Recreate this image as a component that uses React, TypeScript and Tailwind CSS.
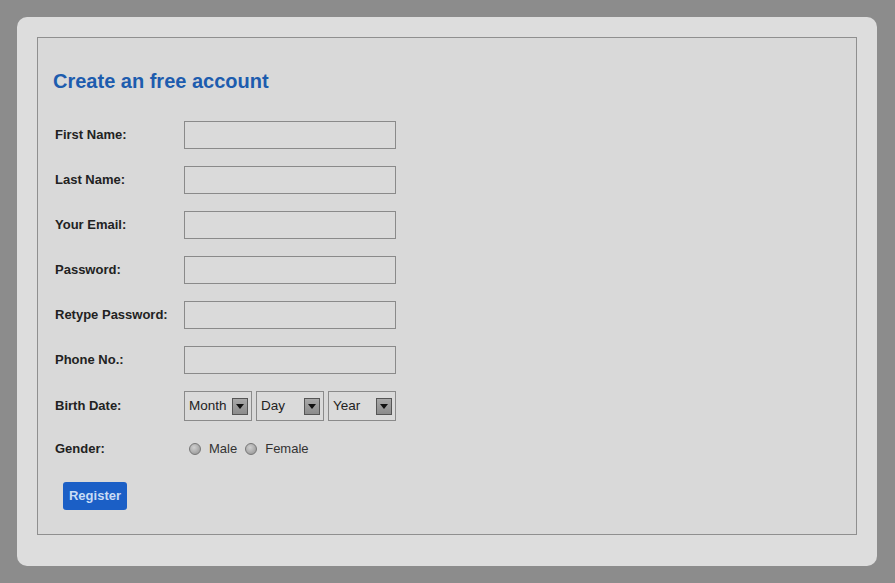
import React from 'react';

const FIELDS = ['First Name:', 'Last Name:', 'Your Email:', 'Password:', 'Retype Password:', 'Phone No.:'];

function FakeSelect({ label, width }: { label: string; width: string }) {
  return (
    <div className={`${width} h-[30px] border border-[#8a8a8a] bg-[#dadada] flex items-center pl-[4px] pr-[3px]`}>
      <span className="text-[13.5px] text-[#222] flex-1">{label}</span>
      <div className="w-[16px] h-[17px] border border-[#555] bg-gradient-to-b from-[#a8a8a8] to-[#8c8c8c] flex items-center justify-center">
        <svg width="8" height="5" viewBox="0 0 8 5">
          <path d="M0 0 L8 0 L4 5 Z" fill="#111" />
        </svg>
      </div>
    </div>
  );
}

function Radio({ label }: { label: string }) {
  return (
    <label className="flex items-center gap-[8px]">
      <span className="w-[12px] h-[12px] rounded-full border border-[#777] bg-[radial-gradient(circle_at_40%_35%,#d0d0d0,#8f8f8f)]" />
      <span className="text-[13px] text-[#333]">{label}</span>
    </label>
  );
}

export default function App() {
  return (
    <div className="min-h-screen w-full bg-[#8c8c8c] p-[17px] font-['Liberation_Sans',Arial,sans-serif]">
      <div className="w-[860px] h-[549px] rounded-[10px] bg-[#dddddd] pt-[20px] pl-[20px] pr-[20px] pb-[31px]">
        <div className="h-full border border-[#8f8f8f] bg-[#d9d9d9] pl-[15px] pt-[31px]">
          <h1 className="text-[20px] leading-[24px] font-bold text-[#1d5cae]">Create an free account</h1>
          <div className="mt-[28px] pl-[2px] flex flex-col gap-[17px]">
            {FIELDS.map(f => (
              <div key={f} className="flex items-center h-[28px]">
                <span className="w-[129px] text-[13px] font-bold text-[#222]">{f}</span>
                <div className="w-[212px] h-[28px] border border-[#8a8a8a] bg-[#dadada]" />
              </div>
            ))}
            <div className="flex items-center h-[30px]">
              <span className="w-[129px] text-[13px] font-bold text-[#222]">Birth Date:</span>
              <div className="flex gap-[4px]">
                <FakeSelect label="Month" width="w-[68px]" />
                <FakeSelect label="Day" width="w-[68px]" />
                <FakeSelect label="Year" width="w-[68px]" />
              </div>
            </div>
            <div className="flex items-center h-[18px] mt-[2px]">
              <span className="w-[134px] text-[13px] font-bold text-[#222]">Gender:</span>
              <div className="flex gap-[8px]">
                <Radio label="Male" />
                <Radio label="Female" />
              </div>
            </div>
            <div className="pl-[8px] mt-[7px]">
              <button className="w-[64px] h-[28px] rounded-[3px] bg-[#1b5fc6] text-[13px] font-bold text-[#c9dcf5]">Register</button>
            </div>
          </div>
        </div>
      </div>
    </div>
  );
}
